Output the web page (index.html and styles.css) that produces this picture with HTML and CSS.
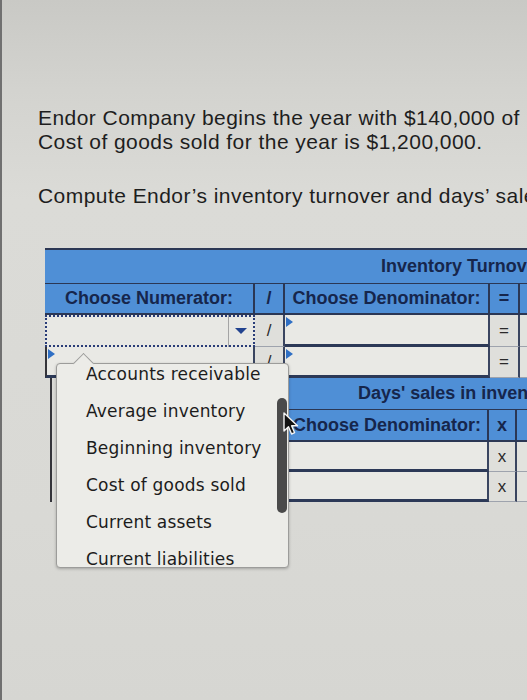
FILE: index.html
```html
<!DOCTYPE html>
<html>
<head>
<meta charset="utf-8">
<link rel="stylesheet" href="styles.css">
</head>
<body>
<div class="page">
  <p class="prompt">Endor Company begins the year with $140,000 of<br>Cost of goods sold for the year is $1,200,000.</p>
  <p class="prompt q">Compute Endor’s inventory turnover and days’ sales in inventory.</p>

  <div class="turnover">
    <div class="title t1">Inventory Turnover</div>
    <div class="hd">Choose Numerator:</div>
    <div class="hd">/</div>
    <div class="hd">Choose Denominator:</div>
    <div class="hd">=</div>
    <div class="hd end"></div>

    <div class="cell select">
      <div class="sel-value"></div>
      <div class="sel-arrow"><span class="tri-down"></span></div>
      <div class="dropdown">
        <span class="caret"></span>
        <ul class="options">
          <li>Accounts receivable</li>
          <li>Average inventory</li>
          <li>Beginning inventory</li>
          <li>Cost of goods sold</li>
          <li>Current assets</li>
          <li>Current liabilities</li>
        </ul>
        <span class="thumb"></span>
      </div>
    </div>
    <div class="cell op">/</div>
    <div class="cell input mark"></div>
    <div class="cell op">=</div>
    <div class="cell res"></div>

    <div class="cell input mark first"></div>
    <div class="cell op">/</div>
    <div class="cell input mark"></div>
    <div class="cell op">=</div>
    <div class="cell res"></div>
  </div>

  <div class="days">
    <div class="blank"></div>
    <div class="title t2">Days' sales in inventory</div>
    <div class="blank"></div>
    <div class="hd">Choose Denominator:</div>
    <div class="hd">x</div>
    <div class="hd end"></div>

    <div class="blank"></div>
    <div class="cell input"></div>
    <div class="cell op">x</div>
    <div class="cell res"></div>

    <div class="blank"></div>
    <div class="cell input"></div>
    <div class="cell op">x</div>
    <div class="cell res"></div>
  </div>

  <svg class="cursor" width="16" height="24" viewBox="0 0 16 24">
    <path d="M1 1 L1 19 L5.5 14.8 L8.6 22 L11.6 20.7 L8.6 13.8 L14.5 13.8 Z" fill="#111" stroke="#f4f4f4" stroke-width="1.4" stroke-linejoin="round"/>
  </svg>
</div>
</body>
</html>
```
FILE: styles.css
```css
html, body {
  margin: 0;
  padding: 0;
  width: 527px;
  height: 700px;
  overflow: hidden;
}

body {
  background: linear-gradient(180deg, #c9c9c5 0px, #d3d3cf 90px, #dbdbd7 200px, #d9d9d5 520px, #d6d6d2 700px);
  font-family: "Liberation Sans", Arial, sans-serif;
}

.page {
  position: relative;
  width: 527px;
  height: 700px;
  overflow: hidden;
  box-sizing: border-box;
  border-left: 2px solid #707070;
  padding-top: 106px;
}

.prompt {
  margin: 0 0 0 36px;
  font-size: 21px;
  line-height: 24px;
  letter-spacing: 0.45px;
  white-space: nowrap;
  color: #1e1e1e;
}

.prompt.q {
  margin-top: 30px;
}

/* ---------- tables ---------- */
.turnover,
.days {
  display: grid;
  box-sizing: border-box;
  color: #16264c;
}

.turnover {
  margin: 40px 0 0 43px;
  width: 822px;
  grid-template-columns: 210px 30px 205px 30px 347px;
  grid-template-rows: 34px 31px 32px 31px;
  border-top: 2px solid #2b3754;
}

.days {
  margin-left: 48px;
  width: 774px;
  grid-template-columns: 237px 202px 28px 307px;
  grid-template-rows: 32px 32px 30px 30px;
}

.title {
  background: #4f8fd6;
  font-weight: bold;
  font-size: 18px;
  white-space: nowrap;
  display: flex;
  align-items: center;
  border-bottom: 1px solid #2b3754;
  box-sizing: border-box;
}

.t1 {
  grid-column: 1 / -1;
  padding-left: 336px;
}

.t2 {
  grid-column: 2 / -1;
  padding-left: 71px;
}

.hd {
  background: #4f8fd6;
  font-weight: bold;
  font-size: 18px;
  white-space: nowrap;
  display: flex;
  align-items: center;
  justify-content: center;
  box-sizing: border-box;
  border-right: 2px solid #2b3754;
  border-bottom: 2px solid #2b3754;
}

.hd.end {
  border-right: none;
}

.blank {
  border-left: 2px solid #34343a;
}

.cell {
  box-sizing: border-box;
  background: #e3e3df;
  border-right: 2px solid #3a4560;
  border-bottom: 1px solid #9ea3ad;
}

.cell.op {
  display: flex;
  align-items: center;
  justify-content: center;
  font-size: 17px;
  color: #2a2a2a;
  background: #dfdfdb;
}

.cell.input {
  position: relative;
  background: #e9e9e5;
  border-bottom: 3px solid #2c3957;
}

.cell.res {
  background: #e2e2de;
  border-right: none;
}

.cell.input.first {
  border-left: 2px solid #34343a;
}

.mark::before {
  content: "";
  position: absolute;
  top: 2px;
  left: 1px;
  border-left: 7px solid #2f6fc4;
  border-top: 5px solid transparent;
  border-bottom: 5px solid transparent;
}

/* ---------- select ---------- */
.select {
  position: relative;
  display: flex;
  background: #e8e8e4;
  border-right: none;
  border-bottom: none;
  outline: 2px dotted #2a3d78;
  outline-offset: -2px;
}

.sel-value {
  flex: 1;
}

.sel-arrow {
  width: 24px;
  margin: 0 2px 0 0;
  border-left: 1px solid #a4a4a4;
  display: flex;
  align-items: center;
  justify-content: center;
}

.tri-down {
  width: 0;
  height: 0;
  border-top: 6px solid #22438f;
  border-left: 6px solid transparent;
  border-right: 6px solid transparent;
}

/* ---------- dropdown ---------- */
.dropdown {
  position: absolute;
  z-index: 10;
  left: 11px;
  top: 48px;
  width: 233px;
  height: 205px;
  box-sizing: border-box;
  background: #ececE8;
  border: 1px solid #9c9c9a;
  border-radius: 4px;
  box-shadow: 0 1px 3px rgba(0, 0, 0, 0.25);
}

.caret {
  position: absolute;
  top: -8px;
  left: 19px;
  width: 14px;
  height: 14px;
  background: #ececE8;
  border-left: 1px solid #9c9c9a;
  border-top: 1px solid #9c9c9a;
  transform: rotate(45deg);
}

.options {
  position: relative;
  list-style: none;
  margin: 0;
  padding: 0;
  height: 203px;
  overflow: hidden;
  border-radius: 4px;
}

.options li {
  height: 37px;
  line-height: 37px;
  padding-left: 29px;
  font-family: "DejaVu Sans", Verdana, sans-serif;
  font-size: 17px;
  letter-spacing: 0.2px;
  color: #1c1c1c;
  white-space: nowrap;
  position: relative;
  top: -8px;
}

.thumb {
  position: absolute;
  left: 220px;
  top: 34px;
  width: 10px;
  height: 115px;
  border-radius: 5px;
  background: #4a4a4a;
}

.cursor {
  position: absolute;
  left: 281px;
  top: 412px;
  z-index: 20;
}
```
